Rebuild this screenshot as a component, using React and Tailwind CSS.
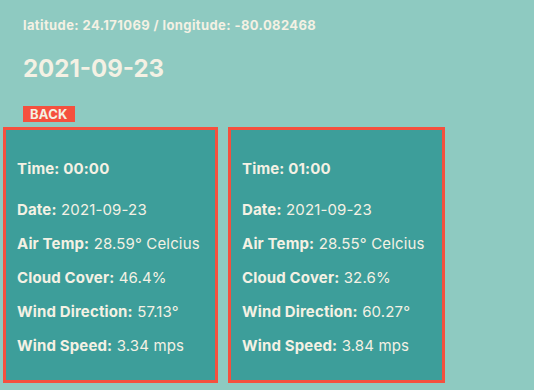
import React from "react";

const cards = [
  { time: "00:00", date: "2021-09-23", temp: "28.59", cloud: "46.4", dir: "57.13", speed: "3.34", w: "w-[215px]" },
  { time: "01:00", date: "2021-09-23", temp: "28.55", cloud: "32.6", dir: "60.27", speed: "3.84", w: "w-[217px]" },
];

function Row({ label, value }) {
  return (
    <div className="text-[15px] leading-[18px] tracking-[0.15px] whitespace-nowrap">
      <span className="font-bold">{label}:</span> {value}
    </div>
  );
}

export default function App() {
  return (
    <div
      className="w-[534px] h-[390px] overflow-hidden bg-[#8ecac1] text-[#f4f1e4]"
      style={{ fontFamily: "Inter, 'Noto Sans', sans-serif" }}
    >
      <div className="px-[23px] pt-[17px]">
        <div className="text-[13px] leading-[16px] font-bold tracking-[0.4px]">latitude: 24.171069 / longitude: -80.082468</div>
        <div className="mt-[21px] text-[24px] leading-[29px] font-bold">2021-09-23</div>
        <div className="mt-[23px] flex">
          <div className="bg-[#f5503e] h-[16px] px-[7px] text-[13px] leading-[16px] font-bold tracking-[0.2px]">BACK</div>
        </div>
      </div>
      <div className="mt-[5px] ml-[3px] flex gap-[10px]">
        {cards.map((c) => (
          <div key={c.time} className={`${c.w} border-[3px] border-[#f5503e] bg-[#3d9e9a] pl-[11px] pt-[30px] pb-[25px]`}>
            <div className="text-[15px] leading-[18px] tracking-[0.15px] font-bold mb-[23px]">Time: {c.time}</div>
            <div className="flex flex-col gap-[16px]">
              <Row label="Date" value={c.date} />
              <Row label="Air Temp" value={`${c.temp}° Celcius`} />
              <Row label="Cloud Cover" value={`${c.cloud}%`} />
              <Row label="Wind Direction" value={`${c.dir}°`} />
              <Row label="Wind Speed" value={`${c.speed} mps`} />
            </div>
          </div>
        ))}
      </div>
    </div>
  );
}
